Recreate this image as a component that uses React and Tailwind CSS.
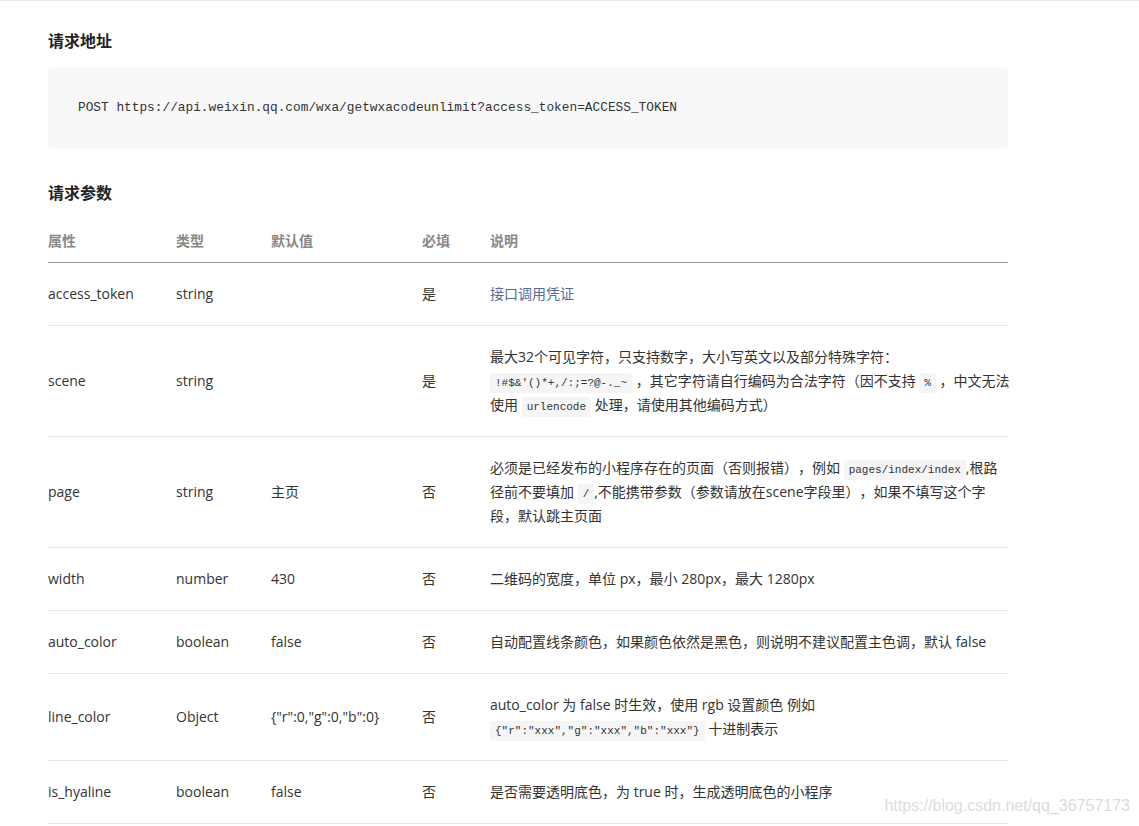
const sans = { fontFamily: '"Open Sans", "Noto Sans CJK SC", sans-serif' };

function Code({ children }) {
  return (
    <code className="whitespace-nowrap rounded-[3px] bg-[#f5f5f5] px-[5px] py-[4px] font-['Liberation_Mono',monospace] text-[11px] leading-[12px] text-[#333]">
      {children}
    </code>
  );
}

const rows = [
  { name: 'access_token', type: 'string', def: '', req: '是', desc: <span className="text-[#576b95]">接口调用凭证</span> },
  {
    name: 'scene',
    type: 'string',
    def: '',
    req: '是',
    desc: (
      <>
        最大32个可见字符，只支持数字，大小写英文以及部分特殊字符： <Code>{"!#$&'()*+,/:;=?@-._~"}</Code> ，其它字符请自行编码为合法字符（因不支持 <Code>%</Code> ，中文无法使用 <Code>urlencode</Code> 处理，请使用其他编码方式）
      </>
    ),
  },
  {
    name: 'page',
    type: 'string',
    def: '主页',
    req: '否',
    desc: (
      <>
        必须是已经发布的小程序存在的页面（否则报错），例如 <Code>pages/index/index</Code>,根路径前不要填加 <Code>/</Code>,不能携带参数（参数请放在scene字段里），如果不填写这个字段，默认跳主页面
      </>
    ),
  },
  { name: 'width', type: 'number', def: '430', req: '否', desc: '二维码的宽度，单位 px，最小 280px，最大 1280px' },
  { name: 'auto_color', type: 'boolean', def: 'false', req: '否', desc: '自动配置线条颜色，如果颜色依然是黑色，则说明不建议配置主色调，默认 false' },
  {
    name: 'line_color',
    type: 'Object',
    def: '{"r":0,"g":0,"b":0}',
    req: '否',
    desc: (
      <>
        auto_color 为 false 时生效，使用 rgb 设置颜色 例如 <Code>{'{"r":"xxx","g":"xxx","b":"xxx"}'}</Code> 十进制表示
      </>
    ),
  },
  { name: 'is_hyaline', type: 'boolean', def: 'false', req: '否', desc: '是否需要透明底色，为 true 时，生成透明底色的小程序' },
];

export default function App() {
  return (
    <div
      className="relative h-[826px] w-[1139px] overflow-hidden border-t border-[#e8e8e8] bg-white text-[14px] text-[#333] [text-spacing-trim:space-all]"
      style={sans}
    >
      <div className="ml-[48px] w-[960px]">
        <h3 className="mt-[28px] text-[16px] font-bold leading-6 text-[#222]">请求地址</h3>
        <pre className="mt-[14px] h-[82px] rounded-[4px] bg-[#f8f8f8] px-[30px] py-[31px] font-['Liberation_Mono',monospace] text-[12.8px] leading-5 text-[#333]">
          POST https://api.weixin.qq.com/wxa/getwxacodeunlimit?access_token=ACCESS_TOKEN
        </pre>
        <h3 className="mt-[32px] text-[16px] font-bold leading-6 text-[#222]">请求参数</h3>
        <table className="mt-[15px] w-[960px] table-fixed border-collapse text-left">
          <colgroup>
            <col className="w-[128px]" />
            <col className="w-[95px]" />
            <col className="w-[151px]" />
            <col className="w-[68px]" />
            <col />
          </colgroup>
          <thead>
            <tr className="border-b border-[#999]">
              {['属性', '类型', '默认值', '必填', '说明'].map((h) => (
                <th key={h} className="py-[9px] font-bold leading-6 text-[#888]">
                  {h}
                </th>
              ))}
            </tr>
          </thead>
          <tbody>
            {rows.map((r) => (
              <tr key={r.name} className="border-b border-[#e5e5e5]">
                <td className="py-[19px] align-middle leading-6">{r.name}</td>
                <td className="py-[19px] align-middle leading-6">{r.type}</td>
                <td className="py-[19px] align-middle leading-6">{r.def}</td>
                <td className="py-[19px] align-middle leading-6">{r.req}</td>
                <td className="py-[19px] align-middle leading-6">
                  <div className="-mr-[2px]">{r.desc}</div>
                </td>
              </tr>
            ))}
          </tbody>
        </table>
      </div>
      <div className="absolute bottom-[8px] right-[9px] font-['Liberation_Sans',sans-serif] text-[16px] text-[#dcdcdc] [text-shadow:0_0_1px_#fff]">
        https://blog.csdn.net/qq_36757173
      </div>
    </div>
  );
}
